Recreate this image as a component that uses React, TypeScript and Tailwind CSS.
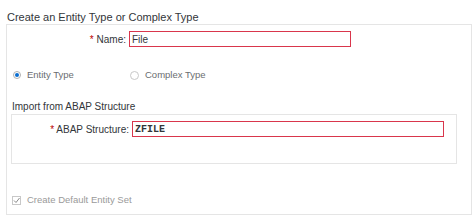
import React from 'react';

const font = { fontFamily: '"Liberation Sans", Arial, sans-serif' };

function Field({ label, value, width, mono }: { label: string; value: string; width: string; mono?: boolean }) {
  return (
    <div className="flex items-center">
      <div className="w-[120px] shrink-0 pr-[3px] text-right text-[10px] text-[#32363a]">
        <span className="text-[#bb0000]">*</span> {label}:
      </div>
      <div className={`${width} h-[16px] border border-[#d9364c] bg-white flex items-center pl-[2px]`}>
        <span className={mono ? 'font-["Liberation_Mono"] font-bold text-[10px] text-[#32363a]' : 'text-[10px] text-[#32363a]'}>
          {value}
        </span>
      </div>
    </div>
  );
}

export default function App() {
  return (
    <div className="w-[474px] h-[218px] bg-white pl-[6px] pr-[2px] pt-[11px]" style={font}>
      <div className="text-[11px] leading-[13px] text-[#32363a] pl-[1px]">Create an Entity Type or Complex Type</div>
      <div className="h-[191px] border border-[#e5e5e5] flex flex-col">
        <div className="pt-[6px] pl-[2px]">
          <Field label="Name" value="File" width="w-[222px]" />
        </div>
        <div className="flex items-center mt-[21px] h-[14px] text-[9.5px] text-[#6a6d70]">
          <div className="flex items-center pl-[6px] w-[123px]">
            <span className="w-[8px] h-[8px] rounded-full border border-[#b0b0b0] flex items-center justify-center">
              <span className="w-[4px] h-[4px] rounded-full bg-[#0a6ed1]" />
            </span>
            <span className="ml-[6px]">Entity Type</span>
          </div>
          <div className="flex items-center">
            <span className="w-[9px] h-[9px] rounded-full border border-[#c8c8c8]" />
            <span className="ml-[6px]">Complex Type</span>
          </div>
        </div>
        <div className="mt-[19px] pl-[5px] text-[10px] leading-[12px] text-[#32363a]">Import from ABAP Structure</div>
        <div className="ml-[4px] w-[446px] h-[50px] border border-[#e5e5e5] mt-[1px] pt-[6px]">
          <Field label="ABAP Structure" value="ZFILE" width="w-[312px]" mono />
        </div>
        <div className="flex items-center mt-[29px] pl-[5px] text-[9.5px] text-[#9a9a9a]">
          <span className="w-[9px] h-[9px] border border-[#c8c8c8] flex items-center justify-center">
            <svg width="7" height="7" viewBox="0 0 7 7">
              <path d="M1 3.5 L3 5.5 L6.5 1" stroke="#8a8a8a" strokeWidth="1" fill="none" />
            </svg>
          </span>
          <span className="ml-[6px]">Create Default Entity Set</span>
        </div>
      </div>
    </div>
  );
}
